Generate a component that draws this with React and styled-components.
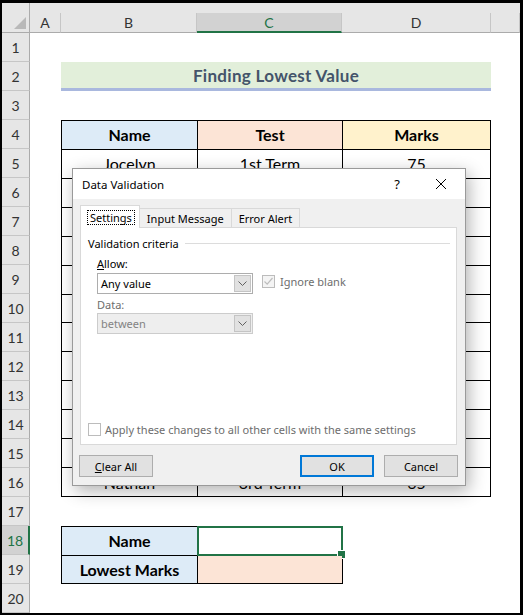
import React from 'react'
import styled, { createGlobalStyle, css } from 'styled-components'

const GlobalStyle = createGlobalStyle`
  html, body {
    margin: 0;
    padding: 0;
    background: #fff;
  }
  * {
    box-sizing: border-box;
  }
`

const GREEN = '#217346'
const COLS = ['A', 'B', 'C', 'D', '']
const ROWS = Array.from({ length: 20 }, (_, i) => i + 1)

// rows 6-15 sit under the dialog, so only the first and last entries show
const DATA = [
  ['Jocelyn', '1st Term', 75],
  ...Array.from({ length: 10 }, () => ['', '', '']),
  ['Nathan', '3rd Term', 65],
]

const FILLS = {
  blue: '#DDEBF7',
  peach: '#FCE4D6',
  yellow: '#FFF2CC',
  white: '#FFFFFF',
}

const App = () => {
  return (
    <>
      <GlobalStyle />
      <Frame>
        <Sheet>
          <TopStrip />
          <Corner>
            <svg width='12' height='12' viewBox='0 0 12 12'>
              <polygon points='12,0 12,12 0,12' fill='#B9B9B9' />
            </svg>
          </Corner>
          {COLS.map((c, i) => (
            <ColHead key={i} $col={i + 2} $active={c === 'C'}>
              {c}
            </ColHead>
          ))}
          {ROWS.map((r) => (
            <RowHead key={r} $row={r} $active={r === 18}>
              {r}
            </RowHead>
          ))}

          <Title>Finding Lowest Value</Title>

          <DataTable>
            <Cell $fill='blue' $head>Name</Cell>
            <Cell $fill='peach' $head>Test</Cell>
            <Cell $fill='yellow' $head>Marks</Cell>
            {DATA.map(([name, term, marks], i) => (
              <React.Fragment key={i}>
                <Cell>{name}</Cell>
                <Cell>{term}</Cell>
                <Cell>{marks}</Cell>
              </React.Fragment>
            ))}
          </DataTable>

          <LookupTable>
            <Cell $fill='blue' $head>Name</Cell>
            <Cell $selected />
            <Cell $fill='blue' $head>Lowest Marks</Cell>
            <Cell $fill='peach' />
          </LookupTable>
        </Sheet>

        <Dialog>
          <TitleBar>
            <DialogTitle>Data Validation</DialogTitle>
            <TitleButton>?</TitleButton>
            <TitleButton>
              <svg width='12' height='12' viewBox='0 0 12 12'>
                <path d='M1 1 L11 11 M11 1 L1 11' stroke='#000' strokeWidth='1' />
              </svg>
            </TitleButton>
          </TitleBar>

          <DialogBody>
            <Tabs>
              <Tab $active>
                <Focus>Settings</Focus>
              </Tab>
              <Tab>Input Message</Tab>
              <Tab>Error Alert</Tab>
            </Tabs>

            <Panel>
              <GroupHead>Validation criteria</GroupHead>
              <Criteria>
                <FieldLabel>
                  <u>A</u>llow:
                </FieldLabel>
                <span />
                <Combo>
                  <ComboText>Any value</ComboText>
                  <ComboArrow>
                    <Chevron />
                  </ComboArrow>
                </Combo>
                <CheckRow>
                  <CheckBox $checked>
                    <svg width='11' height='11' viewBox='0 0 11 11'>
                      <path d='M1.5 5.5 L4.2 8.2 L9.5 2' stroke='#BDBDBD' strokeWidth='1.2' fill='none' />
                    </svg>
                  </CheckBox>
                  <Muted>Ignore blank</Muted>
                </CheckRow>
                <FieldLabel $muted>Data:</FieldLabel>
                <span />
                <Combo $disabled>
                  <ComboText>between</ComboText>
                  <ComboArrow>
                    <Chevron />
                  </ComboArrow>
                </Combo>
              </Criteria>

              <ApplyRow>
                <CheckBox />
                <Muted>Apply these changes to all other cells with the same settings</Muted>
              </ApplyRow>
            </Panel>

            <ButtonRow>
              <Button>
                <u>C</u>lear All
              </Button>
              <Spacer />
              <Button $primary>OK</Button>
              <Button>Cancel</Button>
            </ButtonRow>
          </DialogBody>
        </Dialog>
      </Frame>
    </>
  )
}

const Chevron = () => (
  <svg width='9' height='5' viewBox='0 0 9 5'>
    <polyline points='0.5,0.5 4.5,4.5 8.5,0.5' fill='none' stroke='#606060' strokeWidth='1' />
  </svg>
)

const Frame = styled.div`
  position: relative;
  width: 523px;
  height: 615px;
  border-style: solid;
  border-color: #000;
  border-width: 3px 3px 2px 2px;
  overflow: hidden;
  background: #fff;
`

const Sheet = styled.div`
  display: grid;
  grid-template-columns: 28px 31px 136px 145px 149px 1fr;
  grid-template-rows: 10px 20px repeat(20, 29px);
  font-family: Lato, 'Liberation Sans', sans-serif;
  color: #000;
`

const TopStrip = styled.div`
  grid-column: 1 / -1;
  grid-row: 1;
  background: #e6e6e6;
`

const Corner = styled.div`
  grid-column: 1;
  grid-row: 1 / 3;
  display: flex;
  align-items: flex-end;
  justify-content: flex-end;
  padding: 0 3px 3px 0;
  background: #e6e6e6;
  border-right: 1px solid #ababab;
  border-bottom: 1px solid #ababab;
`

const ColHead = styled.div`
  grid-row: 2;
  grid-column: ${(p) => p.$col};
  display: flex;
  align-items: center;
  justify-content: center;
  background: #e6e6e6;
  border-right: 1px solid #c6c6c6;
  border-bottom: 1px solid #ababab;
  font-size: 14px;
  color: #333;
  ${(p) =>
    p.$active &&
    css`
      background: #d2d2d2;
      color: ${GREEN};
      border-bottom: 2px solid ${GREEN};
    `}
`

const RowHead = styled.div`
  grid-column: 1;
  grid-row: ${(p) => p.$row + 2};
  display: flex;
  align-items: center;
  justify-content: center;
  background: #e6e6e6;
  border-bottom: 1px solid #c6c6c6;
  border-right: 1px solid #ababab;
  font-size: 14px;
  color: #333;
  ${(p) =>
    p.$active &&
    css`
      background: #d2d2d2;
      color: ${GREEN};
      border-right: 2px solid ${GREEN};
    `}
`

const Title = styled.div`
  grid-column: 3 / 6;
  grid-row: 4;
  display: flex;
  align-items: center;
  justify-content: center;
  background: #e2efda;
  border-bottom: 3px solid #a9b8de;
  font-size: 17px;
  letter-spacing: 0.3px;
  font-weight: 700;
  color: #44546a;
`

const DataTable = styled.div`
  grid-column: 3 / 6;
  grid-row: 6 / 19;
  display: grid;
  grid-template-columns: 135px 144px 1fr;
  grid-auto-rows: 1fr;
  gap: 1px;
  padding: 1px;
  background: #000;
`

const LookupTable = styled.div`
  grid-column: 3 / 5;
  grid-row: 20 / 22;
  justify-self: start;
  width: 282px;
  display: grid;
  grid-template-columns: 135px 1fr;
  grid-auto-rows: 1fr;
  gap: 1px;
  padding: 1px;
  background: #000;
`

const Cell = styled.div`
  position: relative;
  display: flex;
  align-items: center;
  justify-content: center;
  background: ${(p) => FILLS[p.$fill || 'white']};
  font-size: 16px;
  font-weight: ${(p) => (p.$head ? 700 : 400)};
  ${(p) =>
    p.$selected &&
    css`
      outline: 2px solid ${GREEN};
      outline-offset: -1px;
      &::after {
        content: '';
        position: absolute;
        right: -4px;
        bottom: -4px;
        width: 7px;
        height: 7px;
        background: ${GREEN};
        border: 1px solid #fff;
      }
    `}
`

const Dialog = styled.div`
  position: absolute;
  left: 70px;
  top: 165px;
  width: 394px;
  height: 318px;
  display: flex;
  flex-direction: column;
  background: #f0f0f0;
  border: 1px solid #9a9a9a;
  box-shadow: 3px 5px 16px rgba(0, 0, 0, 0.3);
  font-family: 'Segoe UI', 'Noto Sans', sans-serif;
  font-size: 11px;
  color: #000;
`

const TitleBar = styled.div`
  height: 30px;
  display: flex;
  align-items: center;
  padding: 0 2px 0 9px;
  background: #fff;
  font-size: 11.5px;
`

const DialogTitle = styled.div`
  flex: 1;
`

const TitleButton = styled.div`
  width: 44px;
  display: flex;
  align-items: center;
  justify-content: center;
  font-size: 13px;
`

const DialogBody = styled.div`
  flex: 1;
  display: flex;
  flex-direction: column;
  padding: 7px 8px 7px 7px;
`

const Tabs = styled.div`
  display: flex;
  align-items: flex-end;
  height: 22px;
  margin-bottom: -1px;
  position: relative;
  z-index: 1;
`

const Tab = styled.div`
  display: flex;
  align-items: center;
  height: ${(p) => (p.$active ? 23 : 20)}px;
  padding: 0 7px;
  margin-left: -1px;
  border: 1px solid #d9d9d9;
  border-bottom: ${(p) => (p.$active ? 'none' : '1px solid #d9d9d9')};
  background: ${(p) => (p.$active ? '#fff' : '#f0f0f0')};
  &:first-child {
    margin-left: 0;
    padding: 0 4px 0 6px;
  }
`

const Focus = styled.span`
  border: 1px dotted #000;
  padding: 0 2px;
  line-height: 13px;
`

const Panel = styled.div`
  height: 218px;
  display: flex;
  flex-direction: column;
  padding: 7px 6px 7px 7px;
  background: #fff;
  border: 1px solid #d9d9d9;
`

const GroupHead = styled.div`
  display: flex;
  align-items: center;
  gap: 6px;
  height: 16px;
  &::after {
    content: '';
    flex: 1;
    border-top: 1px solid #dcdcdc;
  }
`

const Criteria = styled.div`
  display: grid;
  grid-template-columns: 156px auto;
  column-gap: 9px;
  margin-top: 5px;
  padding-left: 9px;
`

const FieldLabel = styled.div`
  height: 16px;
  line-height: 16px;
  margin: ${(p) => (p.$muted ? '3px 0 0' : '0 0 1px')};
  color: ${(p) => (p.$muted ? '#6d6d6d' : '#000')};
`

const Combo = styled.div`
  height: 21px;
  display: flex;
  align-items: stretch;
  border: 1px solid ${(p) => (p.$disabled ? '#cccccc' : '#adadad')};
  background: ${(p) => (p.$disabled ? '#eeeeee' : '#fff')};
  color: ${(p) => (p.$disabled ? '#838383' : '#000')};
`

const ComboText = styled.div`
  flex: 1;
  display: flex;
  align-items: center;
  padding-left: 3px;
`

const ComboArrow = styled.div`
  width: 17px;
  display: flex;
  align-items: center;
  justify-content: center;
  margin: 1px;
  background: #e1e1e1;
  border: 1px solid #c4c4c4;
`

const CheckRow = styled.div`
  display: flex;
  align-items: center;
  gap: 5px;
  align-self: start;
  margin-top: 1px;
`

const CheckBox = styled.div`
  width: 13px;
  height: 13px;
  display: flex;
  align-items: center;
  justify-content: center;
  border: 1px solid #bcbcbc;
  background: ${(p) => (p.$checked ? '#f4f4f4' : '#fff')};
`

const Muted = styled.span`
  color: #6d6d6d;
`

const ApplyRow = styled.div`
  margin-top: auto;
  display: flex;
  align-items: center;
  gap: 4px;
`

const ButtonRow = styled.div`
  display: flex;
  gap: 10px;
  margin: 10px -1px 0 -1px;
`

const Spacer = styled.div`
  flex: 1;
`

const Button = styled.div`
  width: 74px;
  height: 22px;
  display: flex;
  align-items: center;
  justify-content: center;
  background: #e1e1e1;
  border: ${(p) => (p.$primary ? '2px solid #0078d7' : '1px solid #adadad')};
`

export default App
